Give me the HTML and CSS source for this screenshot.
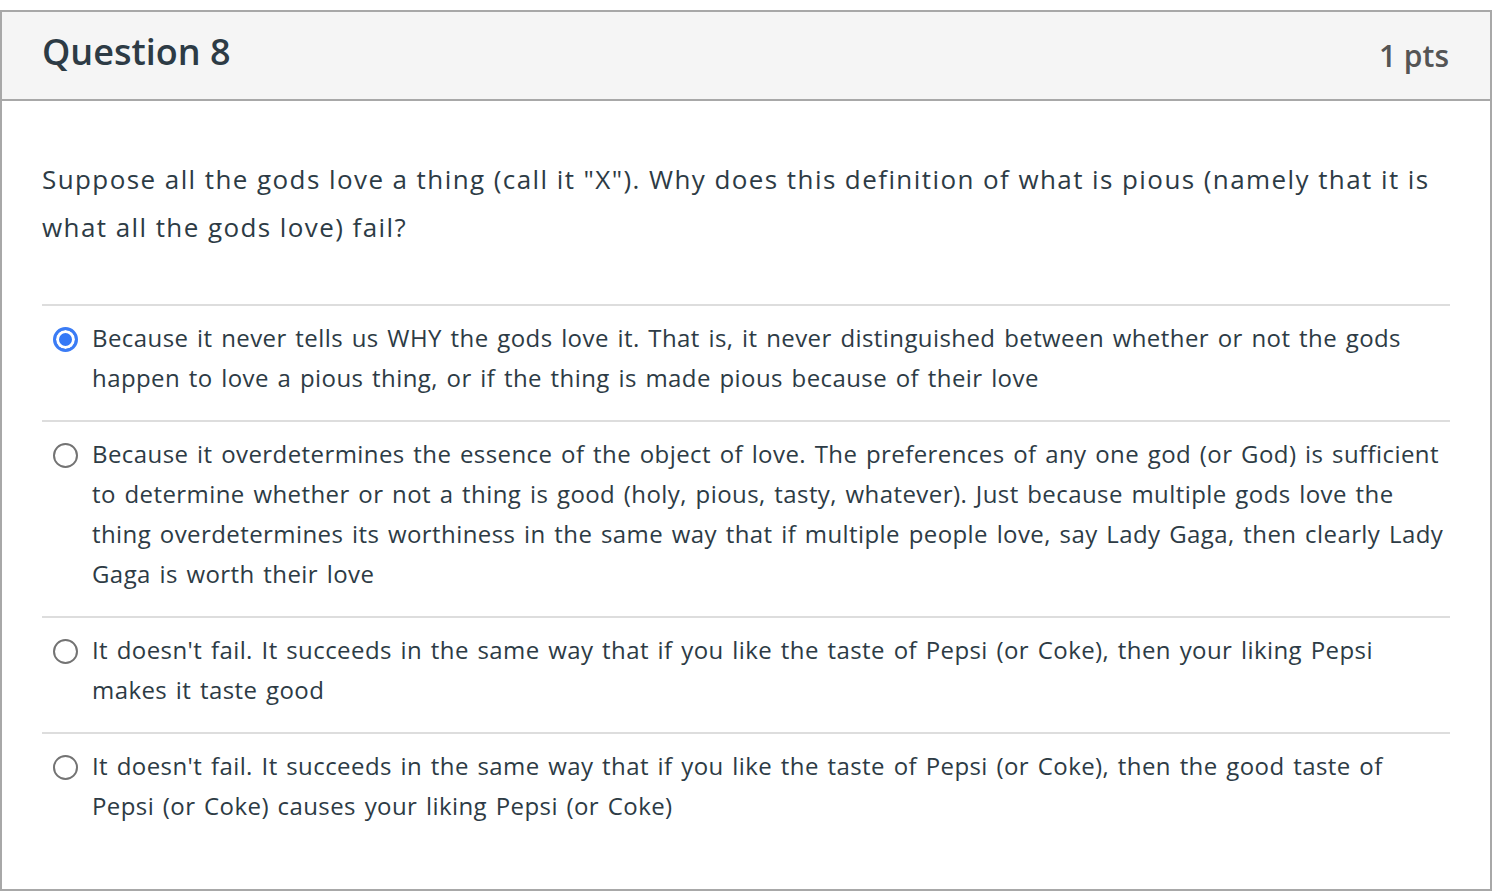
FILE: index.html
```html
<!DOCTYPE html>
<html>
<head>
<meta charset="utf-8">
<link rel="stylesheet" href="styles.css">
</head>
<body>
<div class="question">
  <div class="header">
    <h2 class="title">Question 8</h2>
    <span class="pts">1 pts</span>
  </div>
  <div class="content">
    <p class="prompt">Suppose all the gods love a thing (call it "X"). Why does this definition of what is pious (namely that it is what all the gods love) fail?</p>
    <div class="answers">
      <div class="answer">
        <span class="radio checked"></span>
        <div class="label">Because it never tells us WHY the gods love it. That is, it never distinguished between whether or not the gods happen to love a pious thing, or if the thing is made pious because of their love</div>
      </div>
      <div class="answer">
        <span class="radio"></span>
        <div class="label">Because it overdetermines the essence of the object of love. The preferences of any one god (or God) is sufficient to determine whether or not a thing is good (holy, pious, tasty, whatever). Just because multiple gods love the thing overdetermines its worthiness in the same way that if multiple people love, say Lady Gaga, then clearly Lady Gaga is worth their love</div>
      </div>
      <div class="answer">
        <span class="radio"></span>
        <div class="label">It doesn't fail. It succeeds in the same way that if you like the taste of Pepsi (or Coke), then your liking Pepsi makes it taste good</div>
      </div>
      <div class="answer">
        <span class="radio"></span>
        <div class="label">It doesn't fail. It succeeds in the same way that if you like the taste of Pepsi (or Coke), then the good taste of Pepsi (or Coke) causes your liking Pepsi (or Coke)</div>
      </div>
    </div>
  </div>
</div>
</body>
</html>
```
FILE: styles.css
```css
html, body {
  margin: 0;
  padding: 0;
  background: #ffffff;
}
body {
  padding-top: 10px;
  font-family: "Open Sans", "Noto Sans", sans-serif;
  color: #2d3b45;
}
.question {
  width: 1492px;
  box-sizing: border-box;
  border: 2px solid #a8a8a8;
  background: #fff;
}
.header {
  display: flex;
  justify-content: space-between;
  align-items: center;
  height: 89px;
  box-sizing: border-box;
  padding: 0 41px 0 40px;
  background: #f5f5f5;
  border-bottom: 2px solid #a8a8a8;
}
.title {
  margin: 0;
  font-size: 36px;
  font-weight: 600;
  color: #2d3b45;
  position: relative;
  top: -4px;
}
.pts {
  font-size: 30px;
  font-weight: 600;
  color: #555555;
}
.content {
  padding: 54px 40px 39px 40px;
}
.prompt {
  margin: 0 0 53px 0;
  font-size: 26px;
  line-height: 48px;
  letter-spacing: 1.42px;
}
.answer {
  display: flex;
  align-items: flex-start;
  border-top: 2px solid #dddddd;
  padding: 12px 3px 22px 0;
}
.answer:last-child {
  padding-bottom: 24px;
}
.radio {
  flex: none;
  width: 25px;
  height: 25px;
  margin: 9px 14px 0 11px;
  border: 2px solid #737373;
  border-radius: 50%;
  box-sizing: border-box;
  background: #fff;
}
.radio.checked {
  border: 3px solid #3b7cf5;
  background: #3478f6;
  box-shadow: inset 0 0 0 3px #fff;
}
.label {
  font-size: 24px;
  line-height: 40px;
  letter-spacing: 0.42px;
  word-spacing: 2px;
}
```
